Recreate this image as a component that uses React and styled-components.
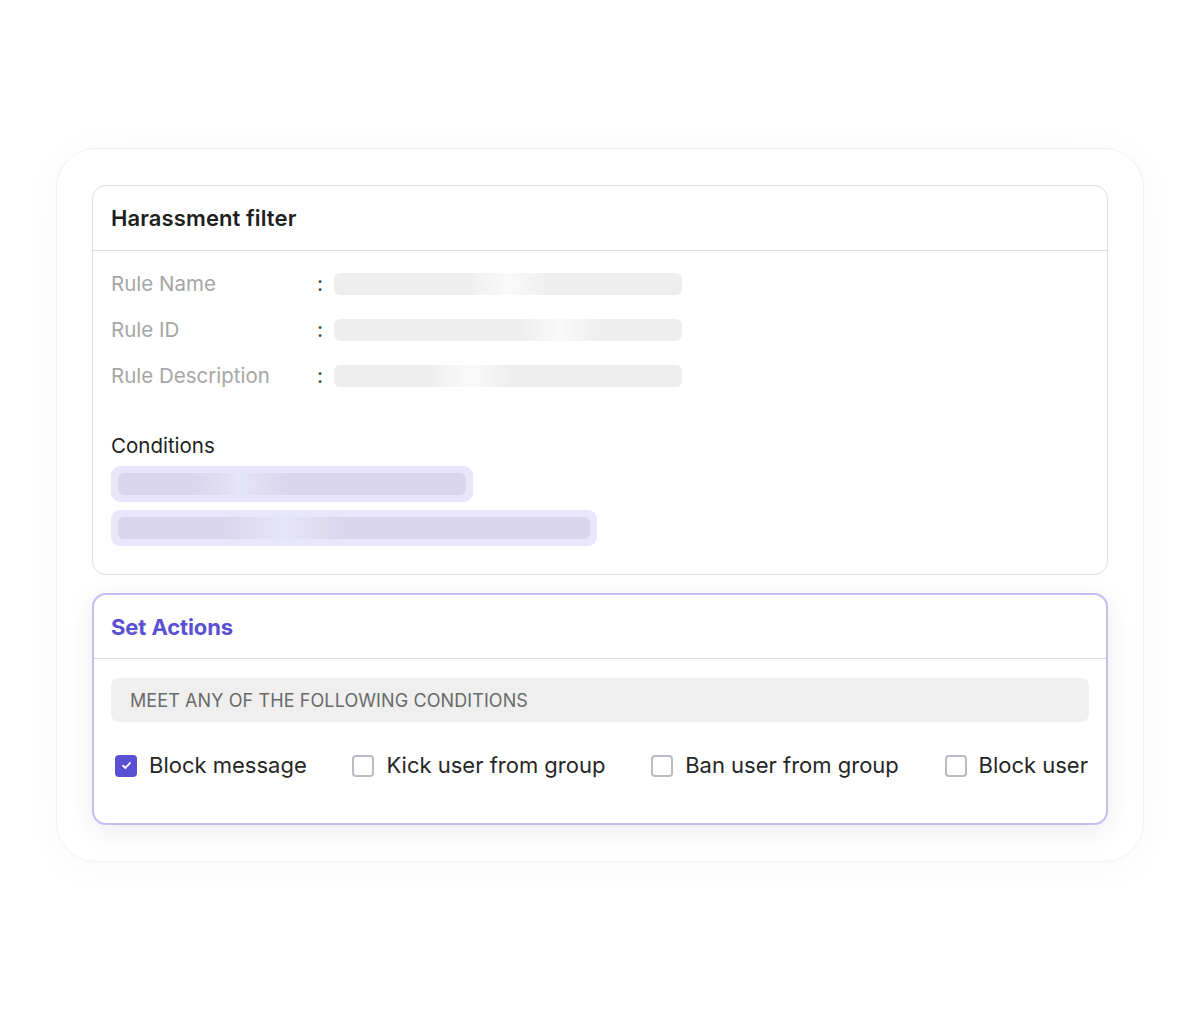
import React from 'react'
import styled, { createGlobalStyle } from 'styled-components'

const GlobalStyle = createGlobalStyle`
  body {
    margin: 0;
    background: #ffffff;
    font-family: Inter, "Noto Sans", sans-serif;
  }
`

const Page = styled.div`
  width: 1200px;
  height: 1009px;
  padding: 148px 56px 0;
  box-sizing: border-box;
`

const Shell = styled.div`
  background: #fff;
  border: 1px solid #f1f1f1;
  border-radius: 40px;
  box-shadow: 0 4px 40px rgba(0, 0, 0, 0.035);
  padding: 36px 35px;
  display: flex;
  flex-direction: column;
  gap: 18px;
`

const Card = styled.div`
  background: #fff;
  border: ${p => (p.$active ? '2px solid #c3bdf0' : '1px solid #dcdcdc')};
  border-radius: 14px;
  box-shadow: ${p => (p.$active ? '0 6px 28px rgba(40, 30, 90, 0.09)' : 'none')};
`

const CardHeader = styled.div`
  height: ${p => (p.$active ? '63px' : '64px')};
  display: flex;
  align-items: center;
  padding: 0 ${p => (p.$active ? '17px' : '18px')};
  border-bottom: 1px solid #dcdcdc;
`

const Title = styled.h2`
  margin: 0;
  font-size: 22px;
  font-weight: ${p => (p.$accent ? 700 : 600)};
  color: ${p => (p.$accent ? '#5b4fd3' : '#1f1f1f')};
  letter-spacing: ${p => (p.$accent ? '-0.1px' : '0.1px')};
`

const Body = styled.div`
  padding: ${p => (p.$active ? '19px 17px 44px' : '22px 18px 28px')};
`

const InfoRow = styled.div`
  display: grid;
  grid-template-columns: 205px 18px 348px;
  align-items: center;
  height: 46px;
  margin-top: ${p => (p.$first ? '-12px' : '0')};
`

const Label = styled.span`
  font-size: 20.5px;
  line-height: 24px;
  color: #a6a6a6;
`

const Colon = styled.span`
  font-size: 20px;
  font-weight: 500;
  color: #444;
  padding-left: 1px;
`

const Skeleton = styled.div`
  height: 22px;
  border-radius: 6px;
  background: linear-gradient(
    90deg,
    #eeeeee 0%,
    #eeeeee ${p => p.$at - 12}%,
    #fafafa ${p => p.$at}%,
    #eeeeee ${p => p.$at + 12}%,
    #eeeeee 100%
  );
`

const SectionLabel = styled.div`
  font-size: 20.5px;
  line-height: 24px;
  color: #1f1f1f;
  margin-top: 35px;
  margin-bottom: 8px;
`

const ConditionList = styled.div`
  display: flex;
  flex-direction: column;
  align-items: flex-start;
  gap: 8px;
`

const ConditionChip = styled.div`
  width: ${p => p.$w}px;
  box-sizing: border-box;
  padding: 7px 7px;
  background: #e8e6fb;
  border-radius: 9px;
`

const ConditionBar = styled.div`
  height: 22px;
  border-radius: 6px;
  background: linear-gradient(
    90deg,
    #d8d5ec 0%,
    #d8d5ec ${p => p.$at - 14}%,
    #e6e4f8 ${p => p.$at}%,
    #d8d5ec ${p => p.$at + 14}%,
    #d8d5ec 100%
  );
`

const MatchBar = styled.div`
  height: 44px;
  border-radius: 8px;
  background: #efefef;
  display: flex;
  align-items: center;
  padding: 0 19px;
  font-size: 18px;
  color: #6a6a6a;
  text-transform: uppercase;
  letter-spacing: 0.1px;
`

const Options = styled.div`
  display: flex;
  justify-content: space-between;
  align-items: center;
  margin-top: 30px;
  padding: 0 1px 0 4px;
`

const Option = styled.label`
  display: flex;
  align-items: center;
  gap: 12px;
  font-size: 22px;
  line-height: 27px;
  color: #262626;
`

const Box = styled.span`
  width: 22px;
  height: 22px;
  box-sizing: border-box;
  border-radius: 4px;
  border: ${p => (p.$checked ? 'none' : '2px solid #b9bcc2')};
  background: ${p => (p.$checked ? '#5b4fd3' : '#fff')};
  display: inline-flex;
  align-items: center;
  justify-content: center;
`

const Check = () => (
  <svg width="13" height="13" viewBox="0 0 12 12" fill="none">
    <path d="M2.8 6.2l2.2 2.1 4.2-4.6" stroke="#fff" strokeWidth="1.7" strokeLinecap="round" strokeLinejoin="round" />
  </svg>
)

const rules = [
  { label: 'Rule Name', at: 50 },
  { label: 'Rule ID', at: 65 },
  { label: 'Rule Description', at: 39 },
]

const actions = [
  { label: 'Block message', checked: true },
  { label: 'Kick user from group' },
  { label: 'Ban user from group' },
  { label: 'Block user' },
]

export default function App() {
  return (
    <>
      <GlobalStyle />
      <Page>
        <Shell>
          <Card>
            <CardHeader>
              <Title>Harassment filter</Title>
            </CardHeader>
            <Body>
              {rules.map((r, i) => (
                <InfoRow key={r.label} $first={i === 0}>
                  <Label>{r.label}</Label>
                  <Colon>:</Colon>
                  <Skeleton $at={r.at} />
                </InfoRow>
              ))}
              <SectionLabel>Conditions</SectionLabel>
              <ConditionList>
                <ConditionChip $w={362}>
                  <ConditionBar $at={35} />
                </ConditionChip>
                <ConditionChip $w={486}>
                  <ConditionBar $at={35} />
                </ConditionChip>
              </ConditionList>
            </Body>
          </Card>
          <Card $active>
            <CardHeader $active>
              <Title $accent>Set Actions</Title>
            </CardHeader>
            <Body $active>
              <MatchBar>Meet any of the following conditions</MatchBar>
              <Options>
                {actions.map(a => (
                  <Option key={a.label}>
                    <Box $checked={a.checked}>{a.checked && <Check />}</Box>
                    {a.label}
                  </Option>
                ))}
              </Options>
            </Body>
          </Card>
        </Shell>
      </Page>
    </>
  )
}
